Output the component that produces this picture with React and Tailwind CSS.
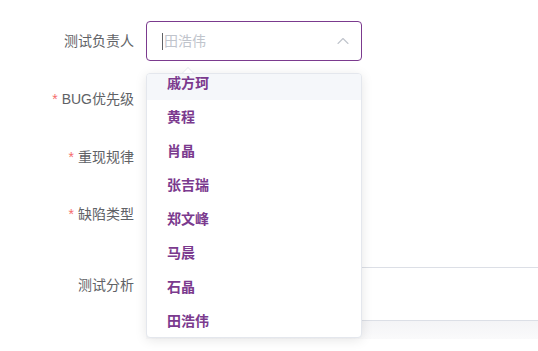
import { ChevronUp } from 'lucide-react';

const names = ['戚方珂', '黄程', '肖晶', '张吉瑞', '郑文峰', '马晨', '石晶', '田浩伟'];

function Label({ text, required }) {
  return (
    <div className="w-[146px] shrink-0 pr-3 text-right text-[14px] text-[#606266]">
      {required && <span className="mr-1 text-[#f56c6c]">*</span>}
      {text}
    </div>
  );
}

function Dropdown() {
  return (
    <div className="absolute left-0 top-[52px] z-10 w-[216px]">
      <div className="absolute left-[36px] top-[-6px] h-0 w-0 border-x-[6px] border-b-[6px] border-x-transparent border-b-[#e4e7ed]" />
      <div className="absolute left-[37px] top-[-5px] h-0 w-0 border-x-[5px] border-b-[5px] border-x-transparent border-b-white" />
      <div className="h-[265px] overflow-hidden rounded-[4px] border border-[#e4e7ed] bg-white shadow-[0_2px_12px_rgba(0,0,0,0.1)]">
        <ul className="-mt-[8px]">
          {names.map((n, i) => (
            <li
              key={n}
              className={`flex h-[34px] items-center px-5 text-[14px] font-bold text-[#7b3a8e] ${
                i === 0 ? 'bg-[#f5f7fa]' : ''
              }`}
            >
              {n}
            </li>
          ))}
        </ul>
      </div>
    </div>
  );
}

export default function App() {
  return (
    <div className="h-[351px] overflow-hidden bg-white pt-[21px] font-['Liberation_Sans','Noto_Sans_CJK_SC',sans-serif]">
      <div className="flex h-10 items-center">
        <Label text="测试负责人" />
        <div className="relative">
          <div className="flex h-10 w-[216px] items-center rounded-[4px] border border-[#7b3a8e] pl-[15px] pr-2">
            <span className="h-[17px] w-px bg-[#606266]" />
            <span className="ml-px flex-1 text-[14px] text-[#c0c4cc]">田浩伟</span>
            <ChevronUp size={20} strokeWidth={1.3} className="text-[#c0c4cc]" />
          </div>
          <Dropdown />
        </div>
      </div>

      <div className="mt-[18px] flex h-10 items-center">
        <Label text="BUG优先级" required />
      </div>
      <div className="mt-[18px] flex h-10 items-center">
        <Label text="重现规律" required />
      </div>
      <div className="mt-[17px] flex h-10 items-center">
        <Label text="缺陷类型" required />
      </div>

      <div className="mt-[33px] flex">
        <div className="pt-[8px]">
          <Label text="测试分析" />
        </div>
        <div className="flex-1">
          <div className="h-[54px] border-y border-[#dcdfe6] bg-white" />
          <div className="h-[18px] bg-gradient-to-b from-[#f4f4f6] to-[#fafafb]" />
        </div>
      </div>
    </div>
  );
}
